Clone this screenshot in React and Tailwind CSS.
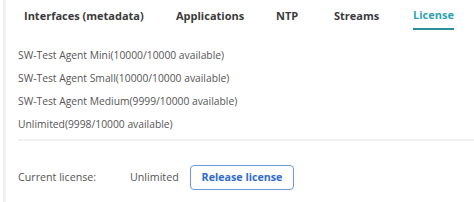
export default function App() {
  const items = [
    "SW-Test Agent Mini(10000/10000 available)",
    "SW-Test Agent Small(10000/10000 available)",
    "SW-Test Agent Medium(9999/10000 available)",
    "Unlimited(9998/10000 available)",
  ];
  const tabs = [
    ["Interfaces (metadata)", "w-[152px]"],
    ["Applications", "w-[100px]"],
    ["NTP", "w-[58px]"],
    ["Streams", "w-[79px]"],
  ];
  return (
    <div className="w-[474px] h-[202px] bg-white flex overflow-hidden" style={{ fontFamily: '"Open Sans", sans-serif' }}>
      <div className="w-[3px] shrink-0" />
      <div className="w-[3px] shrink-0 bg-[#f0f0f2]" />
      <div className="flex-1 flex flex-col">
        <div className="flex h-[30px] pl-[18px] text-[11px] font-bold">
          {tabs.map(([t, w]) => (
            <div key={t} className={"h-full flex items-center pt-[3px] text-[#3a3a3a] " + w}>
              {t}
            </div>
          ))}
          <div className="h-[30px] flex items-center pt-[3px] text-[#2ea3b1] border-b-2 border-[#2a8f9b]">License</div>
        </div>
        <div className="flex flex-col pl-[12px] pt-[14px] text-[10.3px] text-[#555] leading-[23px]">
          {items.map((s) => (
            <div key={s}>{s}</div>
          ))}
        </div>
        <div className="ml-[12px] mt-[3px] h-[2px] bg-[#f0f0f0]" />
        <div className="flex items-center pl-[12px] mt-[24px] text-[10.7px] text-[#555]">
          <span className="w-[112px]">Current license:</span>
          <span className="w-[60px]">Unlimited</span>
          <button className="w-[104px] h-[25px] border border-[#6d98de] rounded-[4px] text-[#2f6bd1] font-bold text-[10.7px]">
            Release license
          </button>
        </div>
      </div>
    </div>
  );
}
